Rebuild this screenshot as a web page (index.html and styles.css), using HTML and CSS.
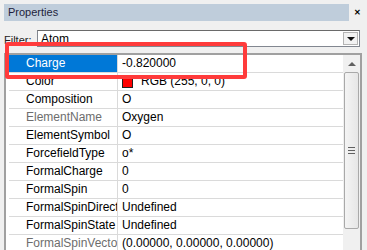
FILE: index.html
```html
<!DOCTYPE html>
<html lang="en">
<head>
    <meta charset="UTF-8">
    <meta name="viewport" content="width=device-width, initial-scale=1.0">
    <title>Properties</title>
    <link rel="stylesheet" href="styles.css">
</head>
<body>
    <div class="panel">
        <div class="titlebar">
            <div class="title">Properties</div>
            <div class="close">&#x2715;</div>
        </div>

        <div class="filter">
            <span class="filter-label">Filter:</span>
            <div class="combo">
                <span class="combo-text">Atom</span>
                <span class="combo-btn"><span class="arrow-down"></span></span>
            </div>
        </div>

        <div class="grid">
            <div class="rows">
                <div class="row selected">
                    <div class="name">Charge</div>
                    <div class="value">-0.820000</div>
                </div>
                <div class="row">
                    <div class="name">Color</div>
                    <div class="value"><span class="swatch"></span>RGB (255, 0, 0)</div>
                </div>
                <div class="row">
                    <div class="name">Composition</div>
                    <div class="value">O</div>
                </div>
                <div class="row">
                    <div class="name disabled">ElementName</div>
                    <div class="value">Oxygen</div>
                </div>
                <div class="row">
                    <div class="name">ElementSymbol</div>
                    <div class="value">O</div>
                </div>
                <div class="row">
                    <div class="name">ForcefieldType</div>
                    <div class="value">o*</div>
                </div>
                <div class="row">
                    <div class="name">FormalCharge</div>
                    <div class="value">0</div>
                </div>
                <div class="row">
                    <div class="name">FormalSpin</div>
                    <div class="value">0</div>
                </div>
                <div class="row">
                    <div class="name">FormalSpinDirection</div>
                    <div class="value">Undefined</div>
                </div>
                <div class="row">
                    <div class="name">FormalSpinState</div>
                    <div class="value">Undefined</div>
                </div>
                <div class="row">
                    <div class="name disabled">FormalSpinVector</div>
                    <div class="value">(0.00000, 0.00000, 0.00000)</div>
                </div>
            </div>
            <div class="scrollbar">
                <div class="scroll-up"><span class="arrow-up"></span></div>
                <div class="thumb">
                    <span class="grip"></span>
                </div>
            </div>
        </div>

        <div class="highlight-box"></div>
    </div>
</body>
</html>
```

FILE: styles.css
```css
html, body {
    margin: 0;
    height: 250px;
    overflow: hidden;
}
body {
    background-color: #f0f0f0;
    font-family: "Liberation Sans", Arial, sans-serif;
    font-size: 12px;
    color: #000;
}
.panel {
    position: relative;
    padding: 4px 0 0 4px;
}
.titlebar {
    display: flex;
    align-items: center;
    height: 17px;
}
.title {
    width: 341px;
    height: 17px;
    line-height: 17px;
    padding-left: 4px;
    background-color: #bfcddb;
    color: #1e1e3c;
    font-size: 11px;
}
.close {
    width: 14px;
    text-align: center;
    font-size: 8px;
    font-weight: bold;
    margin-left: 1px;
}
.filter {
    display: flex;
    align-items: center;
    margin-top: 9px;
    height: 17px;
}
.filter-label {
    width: 33px;
    font-size: 11px;
    color: #222;
    padding-top: 3px;
}
.combo {
    display: flex;
    align-items: center;
    justify-content: space-between;
    width: 323px;
    height: 17px;
    box-sizing: border-box;
    background-color: #fff;
    border: 1px solid #828790;
    border-top-color: #6a6a6a;
}
.combo-text {
    padding-left: 3px;
    font-size: 12px;
}
.combo-btn {
    display: flex;
    align-items: center;
    justify-content: center;
    width: 15px;
    height: 13px;
    margin-right: 1px;
    background-color: #f2f2f2;
    border: 1px solid #b4b4b4;
    box-sizing: border-box;
}
.arrow-down {
    width: 0;
    height: 0;
    border-left: 4px solid transparent;
    border-right: 4px solid transparent;
    border-top: 4px solid #111;
}
.grid {
    display: flex;
    margin-top: 6px;
    width: 358px;
    height: 200px;
    box-sizing: border-box;
    background-color: #fff;
    border-top: 2px solid #a0a0a0;
    border-left: 2px solid #a0a0a0;
    border-right: 2px solid #a0a0a0;
}
.rows {
    width: 334px;
    padding-left: 3px;
    overflow: hidden;
}
.row {
    display: flex;
    height: 17px;
    line-height: 17px;
    border-bottom: 1px solid #dadada;
    white-space: nowrap;
}
.name {
    width: 91px;
    padding-left: 17px;
    overflow: hidden;
    border-right: 1px solid #dadada;
}
.value {
    flex: 1;
    display: flex;
    align-items: center;
    padding-left: 4px;
    overflow: hidden;
}
.row.selected .name {
    background-color: #0078d7;
    color: #fff;
}
.name.disabled {
    color: #6d6d6d;
}
.swatch {
    display: inline-block;
    width: 9px;
    height: 9px;
    margin-right: 8px;
    margin-top: 1px;
    background-color: #ff0000;
    border: 1px solid #222;
}
.scrollbar {
    width: 17px;
    background-color: #f0f0f0;
    display: flex;
    flex-direction: column;
    align-items: center;
}
.scroll-up {
    display: flex;
    align-items: center;
    justify-content: center;
    height: 17px;
    width: 17px;
}
.arrow-up {
    width: 0;
    height: 0;
    border-left: 4px solid transparent;
    border-right: 4px solid transparent;
    border-bottom: 4px solid #606060;
}
.thumb {
    display: flex;
    align-items: center;
    justify-content: center;
    width: 15px;
    height: 157px;
    box-sizing: border-box;
    border: 1px solid #a9a9a9;
    border-radius: 2px;
    background: linear-gradient(to right, #f4f4f4, #e6e6e6);
}
.grip {
    width: 7px;
    height: 5px;
    border-top: 1px solid #606060;
    border-bottom: 1px solid #606060;
    background: linear-gradient(#606060, #606060) center / 7px 1px no-repeat;
}
.highlight-box {
    position: absolute;
    left: 5px;
    top: 42px;
    width: 234px;
    height: 29px;
    border: 4px solid #ff3b3b;
    border-radius: 3px;
}
```
